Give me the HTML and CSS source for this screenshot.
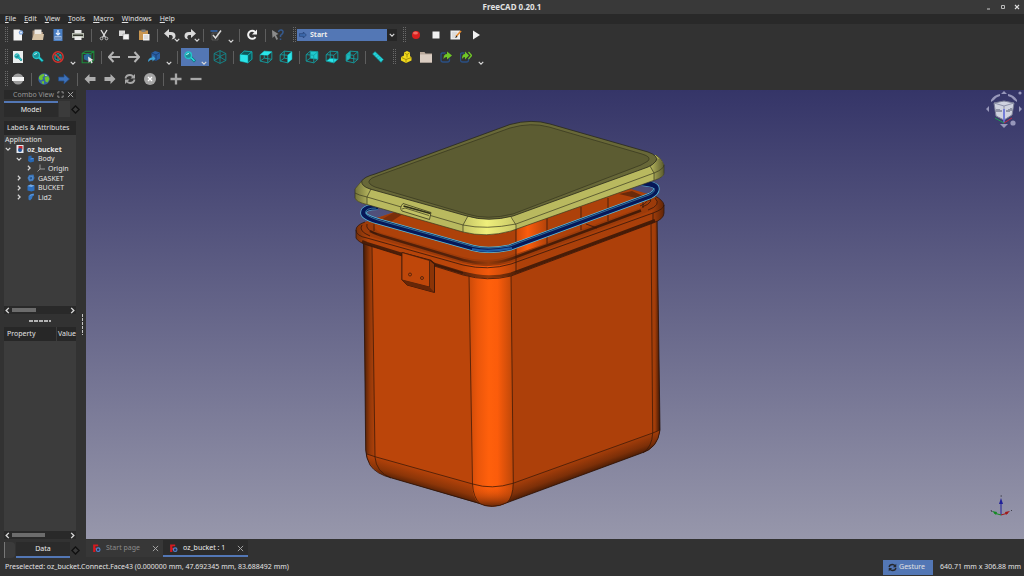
FILE: index.html
```html
<!DOCTYPE html>
<html lang="en">
<head>
    <meta charset="UTF-8">
    <meta name="viewport" content="width=device-width, initial-scale=1.0">
    <title>FreeCAD 0.20.1</title>
    <link rel="stylesheet" href="styles.css">
</head>
<body>
    <!-- shared icons -->
    <svg class="defs" width="0" height="0" aria-hidden="true">
        <symbol id="chev" viewBox="0 0 8 8"><path d="M1 2.5L4 5.5L7 2.5" fill="none" stroke="#d8d8d8" stroke-width="1.6"/></symbol>
        <symbol id="chev-r" viewBox="0 0 8 8"><path d="M2.5 1L5.5 4L2.5 7" fill="none" stroke="#d8d8d8" stroke-width="1.6"/></symbol>
        <symbol id="chev-l" viewBox="0 0 8 8"><path d="M5.5 1L2.5 4L5.5 7" fill="none" stroke="#d8d8d8" stroke-width="1.6"/></symbol>
        <symbol id="close" viewBox="0 0 8 8"><path d="M1 1L7 7M7 1L1 7" fill="none" stroke="#a5a5a5" stroke-width="1.1"/></symbol>
        <symbol id="cube" viewBox="0 0 24 24"><path d="M2 8L15 9V22L2 19ZM2 8L9 2L22 3L15 9M22 3V16L15 22M9 2V14L2 19M9 14L22 16" fill="none" stroke="#12a0a4" stroke-width="1.5" stroke-linejoin="round"/></symbol>
        <symbol id="left" viewBox="0 0 24 24"><path d="M1 12L11 2V8H23V16H11V22Z" fill="#adadad"/></symbol>
        <symbol id="right" viewBox="0 0 24 24"><path d="M23 12L13 2V8H1V16H13V22Z" fill="#adadad"/></symbol>
        <symbol id="thin-left" viewBox="0 0 24 24"><path d="M11 2L2 12L11 22M2 12H24" fill="none" stroke="#b4b4b4" stroke-width="4"/></symbol>
        <symbol id="thin-right" viewBox="0 0 24 24"><path d="M13 2L22 12L13 22M22 12H0" fill="none" stroke="#b4b4b4" stroke-width="4"/></symbol>
        <symbol id="lens" viewBox="0 0 24 24"><path d="M12 11L22 21" stroke="#0d7377" stroke-width="6"/><path d="M13 12L21 20" stroke="#2ad4da" stroke-width="3.4"/><circle cx="8.500" cy="8.500" r="6.500" fill="#1b8f96" stroke="#23c4ca" stroke-width="2.6"/><path d="M5 8Q6 5 10 5" stroke="#b4f4f5" stroke-width="2.4" fill="none"/></symbol>
        <symbol id="reload" viewBox="0 0 24 24"><path d="M3 11Q4 4 12 4Q16 4 19 8M21 13Q20 20 12 20Q8 20 5 16" fill="none" stroke="currentColor" stroke-width="3.6"/><path d="M22 2V11H13ZM2 22V13H11Z" fill="currentColor"/></symbol>
        <symbol id="undo" viewBox="0 0 24 24"><path d="M0 9L10 0V6H14Q23 6 23 14Q23 20 15 21Q19 17 17 14Q16 12 13 12H10V18Z" fill="#dadada"/></symbol>
        <symbol id="logo" viewBox="0 0 16 16"><path d="M2 1H11V4H6V7H9V10H6V14H2Z" fill="#d31a20"/><circle cx="11" cy="10" r="3.2" fill="#26324d" stroke="#5485cf" stroke-width="2"/></symbol>
        <symbol id="float" viewBox="0 0 8 8"><path d="M1 3V1H3M5 1H7V3M7 5V7H5M3 7H1V5" fill="none" stroke="#a5a5a5"/></symbol>
        <symbol id="diamond" viewBox="0 0 8 8"><path d="M4 .8L7.2 4L4 7.2L.8 4Z" fill="#3a3a3a" stroke="#111" stroke-width="1.2"/></symbol>
    </svg>

    <header class="titlebar">
        <span class="title">FreeCAD 0.20.1</span>
        <div class="win-buttons">
            <button aria-label="Minimize"><svg viewBox="0 0 8 8"><path d="M2 6H5" stroke="#ccc"/></svg></button>
            <button aria-label="Maximize"><svg viewBox="0 0 8 8"><path d="M2.5 2.5H5.5V5.5H2.5Z" fill="none" stroke="#bbb"/></svg></button>
            <button aria-label="Close"><svg viewBox="0 0 8 8"><path d="M2 2L6 6M6 2L2 6" stroke="#ddd" stroke-width="1.2"/></svg></button>
        </div>
    </header>

    <nav class="menubar">
        <button><u>F</u>ile</button>
        <button><u>E</u>dit</button>
        <button><u>V</u>iew</button>
        <button><u>T</u>ools</button>
        <button><u>M</u>acro</button>
        <button><u>W</u>indows</button>
        <button><u>H</u>elp</button>
    </nav>

    <div class="toolbars">
        <div class="toolbar">
            <span class="handle"></span>
            <button class="tool" aria-label="New"><svg viewBox="0 0 24 24"><path d="M3 1H15L20 6V23H3Z" fill="#f4f4f4"/><circle cx="18" cy="7" r="4.5" fill="#7fa5dc"/><circle cx="18" cy="7" r="2" fill="#e3edfb"/></svg></button>
            <button class="tool" aria-label="Open"><svg viewBox="0 0 24 24"><path d="M1 3H10L12 6H22V20H1Z" fill="#a58f78"/><path d="M5 1H19V12H5Z" fill="#eee9e2"/><path d="M0 21L4 10H24L22 22H0Z" fill="#d8c4a6"/></svg></button>
            <button class="tool" aria-label="Save"><svg viewBox="0 0 24 24"><path d="M3 0H21V24H3Z" fill="#4a7fc4"/><path d="M5 14H19V21H5Z" fill="#9dbbe2"/><path d="M12 2V11M8 8L12 12L16 8" stroke="#e8f0fb" stroke-width="2.4" fill="none"/><path d="M6 18H18" stroke="#42699c" stroke-width="2"/></svg></button>
            <button class="tool" aria-label="Print"><svg viewBox="0 0 24 24"><path d="M5 2H19V9H5Z" fill="#e6e6e6"/><path d="M0 8H24V18H0Z" fill="#b6bbb0"/><path d="M2 11H22V14H2Z" fill="#34382f"/><path d="M5 15H19V22H5Z" fill="#ececec"/></svg></button>
            <span class="sep"></span>
            <button class="tool" aria-label="Cut"><svg viewBox="0 0 24 24"><path d="M6 2L15 17M18 2L9 17" stroke="#dedede" stroke-width="2.8"/><circle cx="7" cy="19" r="2.6" fill="none" stroke="#bbb" stroke-width="2"/><circle cx="17" cy="19" r="2.6" fill="none" stroke="#bbb" stroke-width="2"/></svg></button>
            <button class="tool" aria-label="Copy"><svg viewBox="0 0 24 24"><path d="M2 3H14V14H2Z" fill="#d9d9d9"/><path d="M10 10H22V21H10Z" fill="#f2f2f2" stroke="#777"/></svg></button>
            <button class="tool" aria-label="Paste"><svg viewBox="0 0 24 24"><path d="M2 3H20V22H2Z" fill="#c99650"/><path d="M7 1H15V6H7Z" fill="#7d7d7d"/><path d="M10 10H23V23H10Z" fill="#efefef"/><path d="M12 14H20M12 18H20" stroke="#aaa"/></svg></button>
            <span class="sep"></span>
            <button class="tool corner" aria-label="Undo"><svg><use href="#undo"/></svg><svg class="chev"><use href="#chev"/></svg></button>
            <button class="tool corner" aria-label="Redo"><svg viewBox="0 0 24 24"><use href="#undo" transform="matrix(-1 0 0 1 24 0)"/></svg><svg class="chev"><use href="#chev"/></svg></button>
            <span class="sep"></span>
            <button class="tool drop" aria-label="Check"><svg viewBox="0 0 24 24"><path d="M1 2H15V6H1Z" fill="#31588f"/><path d="M4 8H16V22H4Z" fill="none" stroke="#666" stroke-width="1.4"/><path d="M6 12L11 18L22 3" stroke="#dcdcdc" stroke-width="3" fill="none"/></svg><svg class="chev"><use href="#chev"/></svg></button>
            <span class="sep"></span>
            <button class="tool" aria-label="Refresh"><svg viewBox="0 0 24 24"><path d="M19 16A8 8 0 1 1 18 6" fill="none" stroke="#f2f2f2" stroke-width="4"/><path d="M22 1V11H12Z" fill="#f2f2f2"/></svg></button>
            <span class="sep"></span>
            <button class="tool" aria-label="What's this?"><svg viewBox="0 0 24 24"><path d="M0 2L13 10L8 12L12 20L9 22L5 14L1 18Z" fill="#8b8b8b"/><path d="M13 6Q14 1 19 2Q24 4 21 9L17 13V16M17 19V22" fill="none" stroke="#35598d" stroke-width="3"/></svg></button>
            <span class="handle"></span>
            <div class="workbench">
                <svg class="wb-icon" viewBox="0 0 24 24"><path d="M1 8H13V3L22 12L13 21V16H1Z" fill="#3d69ab" stroke="#213f72" stroke-width="2"/></svg>
                <select aria-label="Workbench"><option>Start</option></select>
                <span class="wb-arrow"><svg class="chev"><use href="#chev"/></svg></span>
            </div>
            <span class="handle"></span>
            <button class="tool" aria-label="Record macro"><svg viewBox="0 0 24 24"><circle cx="12" cy="12" r="8" fill="#d81f1f"/><ellipse cx="11" cy="8" rx="5" ry="3" fill="#f06a60"/></svg></button>
            <button class="tool" aria-label="Stop macro"><svg viewBox="0 0 24 24"><path d="M5 5H19V19H5Z" fill="#f1f1f1"/></svg></button>
            <button class="tool" aria-label="Edit macro"><svg viewBox="0 0 24 24"><path d="M1 3H20V21H1Z" fill="#ececec"/><path d="M4 8H14M4 12H12M4 16H14" stroke="#aaa"/><path d="M22 4L12 15" stroke="#e58a2e" stroke-width="3.4"/><path d="M13 13L10 18L15 16Z" fill="#222"/></svg></button>
            <button class="tool" aria-label="Run macro"><svg viewBox="0 0 24 24"><path d="M6 3L20 12L6 21Z" fill="#f2f2f2"/></svg></button>
        </div>

        <div class="toolbar">
            <span class="handle"></span>
            <button class="tool" aria-label="Fit all"><svg viewBox="0 0 24 24"><path d="M2 0H22V24H2Z" fill="#e9eeee"/><use href="#lens" x="4" y="4" width="17" height="17"/></svg></button>
            <button class="tool" aria-label="Fit selection"><svg><use href="#lens"/></svg></button>
            <button class="tool drop" aria-label="Draw style"><svg viewBox="0 0 24 24"><path d="M6 8L12 5L18 8V16L12 19L6 16ZM6 8L12 11L18 8M12 11V19" fill="#114648" stroke="#1cb4b8" stroke-width="1.8"/><circle cx="12" cy="12" r="10.400" fill="none" stroke="#d8322d" stroke-width="2.800"/><path d="M5 5L19 19" stroke="#d8322d" stroke-width="2.800"/></svg><svg class="chev"><use href="#chev"/></svg></button>
            <button class="tool cube" aria-label="Bounding box"><svg viewBox="0 0 24 24"><path d="M2 6L8 2H22V17L17 22H2ZM2 6H17V22M17 6L22 2" fill="none" stroke="#1c8b3c" stroke-width="1.8"/><path d="M5 9L12 6L17 9V16L12 19L5 16Z" fill="#2a6a9a"/><path d="M12 11L21 17L18 18L20 22L18 23L16 19L13 22Z" fill="#e6e6e6"/></svg></button>
            <span class="sep"></span>
            <button class="tool" aria-label="Back"><svg><use href="#thin-left"/></svg></button>
            <button class="tool" aria-label="Forward"><svg><use href="#thin-right"/></svg></button>
            <button class="tool drop" aria-label="Link navigation"><svg viewBox="0 0 24 24"><path d="M7 4L14 0L24 3V15L16 20L7 16Z" fill="#2b5fa3"/><path d="M7 4L16 8L24 3M16 8V20" stroke="#173a69" fill="none" stroke-width="1.5"/><path d="M0 22Q0 13 9 13V9L15 15L9 21V17Q4 17 0 22Z" fill="#3fa0d6"/></svg><svg class="chev"><use href="#chev"/></svg></button>
            <span class="sep"></span>
            <button class="tool drop active" aria-label="Zoom"><svg><use href="#lens"/></svg><svg class="chev"><use href="#chev"/></svg></button>
            <button class="tool cube" aria-label="Isometric"><svg viewBox="0 0 24 24"><path d="M12 1L22 6V18L12 23L2 18V6ZM2 6L12 11L22 6M12 11V23M12 1V12L2 18M12 12L22 18" fill="none" stroke="#128d91" stroke-width="1.5"/></svg></button>
            <span class="sep"></span>
            <button class="tool cube" aria-label="Front"><svg viewBox="0 0 24 24"><use href="#cube"/><path d="M9 2L22 3L15 9L2 8ZM15 9L22 3V16L15 22Z" fill="#0f5558" stroke="#12a0a4" stroke-width="1.500"/><path d="M2 8L15 9V22L2 19Z" fill="#2be5ea"/></svg></button>
            <button class="tool cube" aria-label="Top"><svg viewBox="0 0 24 24"><use href="#cube"/><path d="M2 8L9 2L22 3L15 9Z" fill="#2be5ea"/></svg></button>
            <button class="tool cube" aria-label="Right"><svg viewBox="0 0 24 24"><use href="#cube"/><path d="M15 9L22 3V16L15 22Z" fill="#2be5ea"/></svg></button>
            <span class="sep"></span>
            <button class="tool cube" aria-label="Rear"><svg viewBox="0 0 24 24"><path d="M9 2L22 3V16L9 14Z" fill="#20c9cd"/><use href="#cube"/></svg></button>
            <button class="tool cube" aria-label="Bottom"><svg viewBox="0 0 24 24"><path d="M2 19L9 14L22 16L15 22Z" fill="#2be5ea"/><use href="#cube"/></svg></button>
            <button class="tool cube" aria-label="Left"><svg viewBox="0 0 24 24"><path d="M2 8L9 2V14L2 19Z" fill="#20b9bd"/><use href="#cube"/></svg></button>
            <span class="sep"></span>
            <button class="tool" aria-label="Measure"><svg viewBox="0 0 24 24"><path d="M1 6L6 1L23 17L18 23Z" fill="#27d3d9" stroke="#0c7478" stroke-width="1.2"/><path d="M8 7L6 9M12 11L10 13M16 15L14 17" stroke="#0c5c60" stroke-width="1.2"/></svg></button>
            <span class="handle"></span>
            <button class="tool" aria-label="Create part"><svg viewBox="0 0 24 24"><path d="M8 3L14 0L20 3V10L23 13V19L12 24L2 19V12L8 9Z" fill="#f0d81c"/><path d="M3 13L12 17L23 13M12 17V23M9 4L14 7L19 4M14 7V13" fill="none" stroke="#8f7b05" stroke-width="1.5"/></svg></button>
            <button class="tool" aria-label="Create group"><svg viewBox="0 0 24 24"><path d="M0 2H9L11 5H24V23H0Z" fill="#b9a99b"/><path d="M0 7H24V23H0Z" fill="#dacdc2"/></svg></button>
            <button class="tool" aria-label="Make link"><svg viewBox="0 0 24 24"><path d="M11 4H5Q2 4 2 8V18Q2 22 6 22H15Q19 22 19 18V15" fill="none" stroke="#2a4f84" stroke-width="2.6"/><path d="M7 16Q7 6 14 6V1L24 9L14 17V12Q9 12 7 16Z" fill="#6fc727"/></svg></button>
            <button class="tool drop" aria-label="Link actions"><svg viewBox="0 0 24 24"><path d="M9 4H4Q1 4 1 8V18Q1 22 5 22H13Q17 22 17 18V15" fill="none" stroke="#2a4f84" stroke-width="2.6"/><path d="M4 16Q4 6 10 6V1L18 9L10 17V12Q6 12 4 16Z" fill="#6fc727"/><path d="M17 2L23 9L17 16" fill="none" stroke="#6fc727" stroke-width="2.5"/></svg><svg class="chev"><use href="#chev"/></svg></button>
        </div>

        <div class="toolbar">
            <span class="handle"></span>
            <button class="tool" aria-label="Set URL"><svg viewBox="0 0 24 24"><circle cx="12" cy="12" r="11" fill="#9b9b9b"/><path d="M0 8H24V16H0Z" fill="#f4f4f4"/></svg></button>
            <span class="sep"></span>
            <button class="tool" aria-label="Open website"><svg viewBox="0 0 24 24"><circle cx="12" cy="12" r="11.500" fill="#3564a5"/><path d="M2 8Q5 2 12 2L13 6L9 8L10 12L6 15L2 12ZM13 9L20 6L23 12L19 19L15 17ZM7 17L12 16V22L8 21Z" fill="#6ec430"/><path d="M13 3L18 4L16 7Z" fill="#e2f0d4"/></svg></button>
            <button class="tool" aria-label="Start page"><svg viewBox="0 0 24 24"><path d="M1 8H12V2L23 12L12 22V16H1Z" fill="#3c70b8" stroke="#24497f" stroke-width="1.5"/></svg></button>
            <span class="sep"></span>
            <button class="tool" aria-label="Previous page"><svg><use href="#left"/></svg></button>
            <button class="tool" aria-label="Next page"><svg><use href="#right"/></svg></button>
            <button class="tool dim" aria-label="Reload page"><svg><use href="#reload"/></svg></button>
            <button class="tool" aria-label="Stop loading"><svg viewBox="0 0 24 24"><circle cx="12" cy="12" r="12" fill="#a5a5a5"/><path d="M8 8L16 16M16 8L8 16" stroke="#fff" stroke-width="2.6"/></svg></button>
            <span class="sep"></span>
            <button class="tool" aria-label="Zoom in"><svg viewBox="0 0 24 24"><path d="M12 1V23M1 12H23" stroke="#a8a8a8" stroke-width="4.6"/></svg></button>
            <button class="tool" aria-label="Zoom out"><svg viewBox="0 0 24 24"><path d="M1 12H23" stroke="#a8a8a8" stroke-width="4.6"/></svg></button>
        </div>
    </div>

    <main class="main">
        <aside class="dock">
            <div class="dock-title">
                <span>Combo View</span>
                <button aria-label="Float"><svg><use href="#float"/></svg></button>
                <button aria-label="Close panel"><svg><use href="#close"/></svg></button>
            </div>
            <div class="dock-tabs top">
                <button class="dock-tab">Model</button>
                <span class="tab-stub"></span>
                <svg class="diamond"><use href="#diamond"/></svg>
            </div>
            <div class="panel tree-panel">
                <div class="panel-head"><span>Labels &amp; Attributes</span></div>
                <ul class="tree">
                    <li>Application</li>
                    <li class="l1"><svg><use href="#chev"/></svg><svg class="ico" viewBox="0 0 16 16"><path d="M1 0H15V16H1Z" fill="#e6e9ef"/><path d="M5 2H13V9H5Z" fill="#c8232a"/><circle cx="8" cy="10" r="4" fill="#24579b"/></svg><b>oz_bucket</b></li>
                    <li class="l2"><svg><use href="#chev"/></svg><svg class="ico" viewBox="0 0 16 16"><path d="M3 2L9 1V5L14 7V13L7 15L2 12Z" fill="#2767b2"/><path d="M7 8L13 7" stroke="#5b9ae0" stroke-width="2"/></svg>Body</li>
                    <li class="l3"><svg><use href="#chev-r"/></svg><svg class="ico" viewBox="0 0 16 16"><path d="M6 1V10H16M6 10L1 15" fill="none" stroke="#b0b0b0" stroke-width="1.6"/></svg>Origin</li>
                    <li class="l2"><svg><use href="#chev-r"/></svg><svg class="ico" viewBox="0 0 16 16"><path d="M4 2L13 1L15 8L12 14L4 15L1 8Z" fill="#3b76ba"/><path d="M4 6L11 5V11L5 12Z" fill="#245694" stroke="#75a9e0"/></svg>GASKET</li>
                    <li class="l2"><svg><use href="#chev-r"/></svg><svg class="ico" viewBox="0 0 16 16"><path d="M1 4L7 1L15 3V13L9 15L1 13Z" fill="#2b6fc0"/><path d="M1 4L7 1L15 3L9 6Z" fill="#76aae4"/></svg>BUCKET</li>
                    <li class="l2"><svg><use href="#chev-r"/></svg><svg class="ico" viewBox="0 0 16 16"><path d="M3 6Q6 1 14 1V5Q10 6 10 11L6 15L3 13Z" fill="#3678c4"/><path d="M6 5Q9 3 13 3" stroke="#8fbbee" fill="none"/></svg>Lid2</li>
                </ul>
                <div class="scroll"><svg><use href="#chev-l"/></svg><span class="track"><span class="thumb"></span></span><svg><use href="#chev-r"/></svg></div>
            </div>
            <div class="split-h"></div>
            <div class="panel prop-panel">
                <div class="panel-head"><span class="prop">Property</span><span class="value">Value</span></div>
                <div class="props"></div>
                <div class="scroll"><svg><use href="#chev-l"/></svg><span class="track"><span class="thumb wide"></span></span><svg><use href="#chev-r"/></svg></div>
            </div>
            <div class="dock-tabs bottom">
                <span class="tab-stub"></span>
                <button class="dock-tab">Data</button>
                <svg class="diamond"><use href="#diamond"/></svg>
            </div>
        </aside>
        <div class="split-v"></div>

        <section class="workspace">
            <div class="view3d">
                <svg class="scene" viewBox="86 90 938 449" stroke-linejoin="round" role="img" aria-label="Bucket with gasket and lid">
                    <defs>
                        <linearGradient id="front" x1="469" x2="513" y1="0" y2="0" gradientUnits="userSpaceOnUse"><stop offset="0" stop-color="#cb4a09"/><stop offset=".2" stop-color="#ea560b"/><stop offset=".45" stop-color="#ff600c"/><stop offset=".65" stop-color="#fb5c0b"/><stop offset="1" stop-color="#bd4709"/></linearGradient>
                        <linearGradient id="sideL" x1="364" x2="376" y1="0" y2="0" gradientUnits="userSpaceOnUse"><stop offset="0" stop-color="#4d1e06"/><stop offset=".5" stop-color="#943809"/><stop offset="1" stop-color="#b7440a"/></linearGradient>
                        <linearGradient id="sideR" x1="650" x2="660" y1="0" y2="0" gradientUnits="userSpaceOnUse"><stop offset="0" stop-color="#a83f0a"/><stop offset=".5" stop-color="#a23d09"/><stop offset="1" stop-color="#3a1605"/></linearGradient>
                        <linearGradient id="botL" x1="424" y1="470" x2="418" y2="491" gradientUnits="userSpaceOnUse"><stop offset="0" stop-color="#b6430a"/><stop offset=".5" stop-color="#8b3508"/><stop offset="1" stop-color="#331405"/></linearGradient>
                        <linearGradient id="botR" x1="580" y1="459" x2="587" y2="478" gradientUnits="userSpaceOnUse"><stop offset="0" stop-color="#a63e0a"/><stop offset=".5" stop-color="#7c2f08"/><stop offset="1" stop-color="#2b1104"/></linearGradient>
                        <linearGradient id="botC" x1="0" x2="0" y1="484" y2="507" gradientUnits="userSpaceOnUse"><stop offset="0" stop-color="#ff5f0c" stop-opacity="0"/><stop offset="1" stop-color="#5e2406"/></linearGradient>
                        <linearGradient id="inner" x1="515" x2="547" y1="0" y2="0" gradientUnits="userSpaceOnUse"><stop offset="0" stop-color="#c84a0a"/><stop offset=".4" stop-color="#fb5c0c"/><stop offset="1" stop-color="#b2430a"/></linearGradient>
                        <linearGradient id="lidL" x1="355" x2="371" y1="0" y2="0" gradientUnits="userSpaceOnUse"><stop offset="0" stop-color="#737339"/><stop offset="1" stop-color="#bcbc61"/></linearGradient>
                        <linearGradient id="lidC" x1="463" x2="516" y1="0" y2="0" gradientUnits="userSpaceOnUse"><stop offset="0" stop-color="#c4c465"/><stop offset=".45" stop-color="#efef7b"/><stop offset="1" stop-color="#c8c867"/></linearGradient>
                        <linearGradient id="lidR" x1="651" x2="664" y1="0" y2="0" gradientUnits="userSpaceOnUse"><stop offset="0" stop-color="#b2b25b"/><stop offset="1" stop-color="#5a5a2e"/></linearGradient>
                        <linearGradient id="rim" x1="356" x2="664" y1="0" y2="0" gradientUnits="userSpaceOnUse"><stop offset="0" stop-color="#75300a"/><stop offset=".04" stop-color="#b0420a"/><stop offset=".34" stop-color="#bc460a"/><stop offset=".43" stop-color="#f4590b"/><stop offset=".53" stop-color="#ad410a"/><stop offset=".96" stop-color="#a83f0a"/><stop offset="1" stop-color="#602507"/></linearGradient>
                        <linearGradient id="groove" x1="356" x2="664" y1="0" y2="0" gradientUnits="userSpaceOnUse"><stop offset="0" stop-color="#4a1d07"/><stop offset=".34" stop-color="#54210a"/><stop offset=".43" stop-color="#963a09"/><stop offset=".53" stop-color="#4a1d07"/><stop offset="1" stop-color="#451b07"/></linearGradient>
                    </defs>

                    <!-- bucket body -->
                    <path d="M363.500 240L365.700 450Q366 458 370 465Q376 474 391.700 478L478 503Q492 510 507 502.700L641.700 453Q658 448 660 430L657 215L512 265H470Z" fill="#bb450a"/>
                    <path d="M363.500 240L372 243L375 457L391 477Q366 470 365.700 450Z" fill="url(#sideL)"/>
                    <path d="M511 265L652 215L653 433L513 483Z" fill="#ad400a"/>
                    <path d="M651 215H657L660 430Q658 446 643 453Q652 446 653 433Z" fill="url(#sideR)"/>
                    <path d="M366.700 454L375 456.700L472.700 484Q473 497 480 504L391.700 478Q370 472 366.700 454Z" fill="url(#botL)"/>
                    <path d="M513 483L652.700 433L660 430Q658 448 641.700 453L507 502.700Q513 495 513 483Z" fill="url(#botR)"/>
                    <path d="M469 265H511L513 483Q513 497 507 502.700Q492 510 479 503.500Q472 497 472 483Z" fill="url(#front)"/>
                    <path d="M472 484Q492 490 513 483Q513 497 507 502.700Q492 510 479 503.500Q472 497 472 484Z" fill="url(#botC)"/>
                    <g fill="none" stroke="#401a08" stroke-width=".8">
                        <path d="M372 245L375 457Q376 472 391 478M469 275L472.500 484Q473 497 480 504M511 272L513.300 483Q513 497 507 502.700M651 222L652.700 433Q652 447 643 453"/>
                        <path d="M366.700 454L375 456.700L472.700 484Q492 490 513 483.300L652.700 433L660 430"/>
                    </g>
                    <path d="M363.500 240L365.700 450Q366 458 370 465Q376 474 391.700 478L478 503Q492 510 507 502.700L641.700 453Q658 448 660 430L657 215" fill="none" stroke="#24120b" stroke-width=".8"/>

                    <!-- rim of the bucket -->
                    <path d="M365 222Q356 225 356 230V238Q358 242 367 245L463 275Q488 282 511 276L653 223Q664 219 664 213V205Q663 200 655 196L600 180L430 200Z" fill="url(#rim)"/>
                    <path d="M366 222Q356 229 368 236L463 263Q488 270 512 262L650 211Q661 206 655 197L600 181L430 200Z" fill="#9c3b0a"/>
                    <path d="M373 222Q372 228 381 233L463 257Q488 264 512 255L640 208Q651 203 645 194L600 181L430 200Z" fill="#ad410a"/>
                    <path d="M516 218L547 207V243L516 254Z" fill="url(#inner)"/>
                    <g fill="none" stroke="url(#groove)">
                        <path d="M362 241.500L367 243.500L463 273Q488 280 511 274L655 220.500" stroke-width="3"/>
                        <path d="M370 231Q374 233.500 381 235.500L463 260Q488 267 512 258.500L641 210.500" stroke-width="2.600"/>
                    </g>
                    <g fill="none" stroke="#35170b" stroke-width=".8">
                        <path d="M356 230Q356 236 367 238L463 265Q488 271 511 264L653 213Q664 209 664 205"/>
                        <path d="M362 225Q358 231 370 236M648 210Q662 205 655 198"/>
                        <path d="M367 224Q365 230 377 234M642 207Q656 202 648 195M640 206Q651 202 645 195"/>
                        <path d="M365 222Q356 225 356 230V238Q358 242 367 245L463 275Q488 282 511 276L653 223Q664 219 664 213V205Q663 200 655 196"/>
                        <path d="M516 220V272M547 218V244M581 207V230M608 198V221M653 213V220M586 224L597 228M374 224V231M643 202V208"/>
                    </g>
                    <path d="M375 223L395 212L403 214L386 225Z" fill="#7a2f0a"/>
                    <path d="M619 194L632 191L650 199V201L640 199Z" fill="#6b2a0a"/>

                    <!-- latch plate -->
                    <path d="M402 252.500L430 260L434.500 263.500V292.500L407 285L402 280Z" fill="#8b3407" stroke="#35150a" stroke-width=".9"/>
                    <path d="M402 252.500L429.500 260.500V287L402 280Z" fill="#bf470a" stroke="#45200e" stroke-width=".8"/>
                    <path d="M402 280L429.500 287L434.500 292.500L407 285Z" fill="#672607"/>
                    <path d="M430 260L436 265L463 273" fill="none" stroke="#401a08" stroke-width="1.400"/>
                    <circle cx="410" cy="274.500" r="1.500" fill="none" stroke="#30180c" stroke-width=".7"/>
                    <circle cx="422" cy="278" r="1.500" fill="none" stroke="#30180c" stroke-width=".7"/>

                    <!-- gasket -->
                    <g fill="none">
                        <path d="M378 207Q363 207 363.500 213Q363 217 377 221L473 248Q488 252 510 247.500L650 196Q658 192 656 187Q654 184 642 183" stroke="#58bede" stroke-width="6.200"/>
                        <path d="M378 207Q363 207 363.500 213Q363 217 377 221L473 248Q488 252 510 247.500L650 196Q658 192 656 187Q654 184 642 183" stroke="#061758" stroke-width="4.800"/>
                        <path d="M376 208Q365 208 365.500 213Q366 216 378 220L473 246.500Q488 250 510 246L649 195Q656 192 654 188" stroke="#4896b0" stroke-width=".7"/>
                        <path d="M472 249Q488 253 512 248" stroke="#1e5ea8" stroke-width="2.200"/>
                    </g>

                    <!-- lid -->
                    <path d="M361.700 181L355 189V198Q356 202 367 204.500L463 232Q486 238 511 231L655 180Q664 177 664 173V165Q662 159 656 155L487 150Z" fill="#b9b95f"/>
                    <path d="M362 181L355 189V198Q356 202 367 204.500V197L371 189Z" fill="url(#lidL)"/>
                    <path d="M468 216L463 225V232Q486 238 511 231L516 229V224L511 216Q487 222 468 216Z" fill="url(#lidC)"/>
                    <path d="M656 158L660 159L664 165V173Q664 177 654 180V173L650 166Z" fill="url(#lidR)"/>
                    <path d="M361.700 181Q364 177 375 174L510 124.500Q532 118.500 550 124L648 152Q659 156 656 161Q653 165 648 167L513 216Q488 222.500 467 216L370 189Q361 186 361.700 181Z" fill="#686838" stroke="#28281a" stroke-width=".8"/>
                    <path d="M369 181Q370 178 377 176L510 128Q531 122 549 127L642 154Q652 157 648 161L641 165L513 214Q487 220.500 467 214L375 187Q368 184 369 181Z" fill="#5c5c32" stroke="#35351e" stroke-width=".7"/>
                    <g fill="none" stroke="#38381f" stroke-width=".7">
                        <path d="M355 193Q358 195 367 197L463 225Q486 230 516 224L654 173Q664 169 664 165"/>
                        <path d="M371 189L367 197V204M468 216L463 225V232M511 217L516 225V230M650 166L654 173V180"/>
                        <path d="M361.700 181L355 189V198Q356 202 367 204.500L463 232Q486 238 511 231L655 180Q664 177 664 173V165Q662 159 656 155"/>
                    </g>
                    <path d="M403 203.500L431 212.500L429.500 219.500L402 211Q399 208 403 203.500Z" fill="#c2c265" stroke="#37371e" stroke-width=".8"/>
                    <path d="M403.500 206L430.500 213.500" stroke="#2e2e18" stroke-width="1.800"/>
                    <path d="M402 209L405 208L429 215.500" fill="none" stroke="#4a4a28" stroke-width=".8"/>
                </svg>

                <svg class="navcube" viewBox="0 0 40 40" role="img" aria-label="Navigation cube">
                    <g fill="#9797ba"><path d="M20 1L23 4H17ZM2 19L5 16V22ZM38 19L35 16V22ZM16 34H24L20 38Z"/><circle cx="36" cy="3" r="1.600"/><path d="M7 10Q10 5 16 4V6Q12 7 10 10L7 12ZM33 10Q30 5 24 4V6Q28 7 30 10L33 12Z"/><circle cx="29" cy="33" r="2.600"/></g>
                    <path d="M10 13L20 11L30 13L28 25L20 30L12 26Z" fill="#cfd2df" stroke="#7e8198"/>
                    <path d="M10 13L20 16L30 13M20 16V30" fill="none" stroke="#8c90a8"/>
                    <path d="M13 19V22M15 19V22M17 20V22M23 20V22M25 19V22M27 18V21" stroke="#50546a"/>
                    <path d="M20 33V19" stroke="#6670dc" stroke-width="1.600"/><path d="M20 33L11 28" stroke="#1e9c50"/><path d="M20 33L28 28" stroke="#b82a45"/>
                </svg>

                <svg class="axes" viewBox="0 0 28 26" role="img" aria-label="Axis cross">
                    <path d="M14 20V7" stroke="#20209a"/><path d="M12 9L14 3L16 9Z" fill="#20209a"/>
                    <path d="M14 20L7 18" stroke="#148a22"/><path d="M5 16L10 17L9 20Z" fill="#148a22"/>
                    <path d="M14 20L21 18" stroke="#a01a1a"/><path d="M23 16L18 17L19 20Z" fill="#a01a1a"/>
                    <path d="M13.500 1H15M4 15L5 17M24 15L25 16" stroke="#2b2b35" stroke-width=".8"/>
                </svg>
            </div>
            <div class="doc-tabs">
                <div class="doc-tab"><svg><use href="#logo"/></svg><button>Start page</button><button class="x" aria-label="Close Start page"><svg><use href="#close"/></svg></button></div>
                <div class="doc-tab current"><svg><use href="#logo"/></svg><button>oz_bucket : 1</button><button class="x" aria-label="Close oz_bucket"><svg><use href="#close"/></svg></button></div>
            </div>
        </section>
    </main>

    <footer class="statusbar">
        <span class="message">Preselected: oz_bucket.Connect.Face43 (0.000000 mm, 47.692345 mm, 83.688492 mm)</span>
        <button class="gesture"><svg><use href="#reload"/></svg>Gesture</button>
        <span>640.71 mm x 306.88 mm</span>
    </footer>
</body>
</html>
```
FILE: styles.css
```css
* {
    box-sizing: border-box;
}
body {
    margin: 0;
    height: 100vh;
    display: flex;
    flex-direction: column;
    overflow: hidden;
    background-color: #323232;
    color: #e2e2e2;
    font-family: "Noto Sans", "DejaVu Sans", sans-serif;
    font-size: 7px;
    line-height: 10px;
}
button {
    margin: 0;
    padding: 0;
    border: none;
    background: none;
    color: inherit;
    font: inherit;
    white-space: nowrap;
}
svg {
    display: block;
    flex: none;
}
.defs {
    position: absolute;
}

/* title + menu */
.titlebar {
    display: grid;
    grid-template-columns: 1fr auto 1fr;
    align-items: center;
    height: 14px;
    background-color: #393939;
}
.title {
    grid-column: 2;
    font-size: 8px;
    font-weight: bold;
}
.win-buttons {
    display: flex;
    justify-content: flex-end;
    gap: 6px;
    padding-right: 3px;
}
.win-buttons svg {
    width: 8px;
    height: 8px;
}
.menubar {
    display: flex;
    height: 10px;
    padding-left: 1px;
    background-color: #292929;
}
.menubar button {
    padding: 0 4px;
}

/* toolbars */
.toolbars {
    height: 66px;
}
.toolbar {
    display: flex;
    align-items: center;
    height: 22px;
}
.handle {
    width: 4px;
    height: 16px;
    margin-left: 4px;
    background-image: repeating-linear-gradient(90deg, #323232 0 1px, transparent 1px 2px), repeating-linear-gradient(#6a6a6a 0 1px, #323232 1px 2px);
}
.sep {
    width: 6px;
    height: 13px;
    background: linear-gradient(#5e5e5e, #5e5e5e) center / 1px 100% no-repeat;
}
.tool {
    position: relative;
    display: flex;
    align-items: center;
    width: 20px;
    height: 18px;
    padding: 0 4px;
}
.tool > svg {
    width: 12px;
    height: 12px;
}
.tool.cube {
    padding: 0 3px;
}
.tool.cube > svg {
    width: 14px;
    height: 14px;
}
.tool .chev {
    position: absolute;
    right: 2px;
    bottom: 0;
    width: 6px;
    height: 6px;
}
.tool.corner .chev {
    right: 0;
    bottom: 1px;
}
.tool.drop {
    width: 30px;
}
.tool.active {
    width: 28px;
    margin: 0 1px;
    padding: 0 3px;
    background-color: #5377b5;
}
.dim {
    color: #a8a8a8;
}
.workbench {
    position: relative;
    display: flex;
    width: 100px;
    height: 12px;
    margin: 0 1px;
}
.workbench select {
    flex: 1;
    padding: 0 0 0 13px;
    border: none;
    border-radius: 0;
    appearance: none;
    background-color: #5377b5;
    color: #ececec;
    font: bold 7px/12px "Noto Sans", sans-serif;
}
.wb-icon {
    position: absolute;
    left: 2px;
    top: 2px;
    width: 8px;
    height: 8px;
}
.wb-arrow {
    display: grid;
    place-items: center;
    width: 10px;
    background-color: #262626;
}
.wb-arrow .chev {
    width: 6px;
    height: 6px;
}

/* left dock */
.main {
    flex: 1;
    display: flex;
    min-height: 0;
}
.dock {
    display: flex;
    flex-direction: column;
    width: 80px;
    padding-left: 4px;
}
.dock-title {
    display: flex;
    align-items: center;
    gap: 3px;
    height: 9px;
    margin-right: 4px;
    padding: 0 2px 0 9px;
    background-color: #292929;
    color: #969696;
}
.dock-title span {
    flex: 1;
    white-space: nowrap;
}
.dock-title svg {
    width: 7px;
    height: 7px;
}
.dock-tabs {
    display: flex;
    gap: 1px;
    align-items: stretch;
    height: 16px;
}
.dock-tabs.top {
    margin: 2px 0 4px;
}
.dock-tabs.bottom {
    margin-top: 3px;
}
.dock-tab {
    width: 54px;
    background-color: #2b2b2b;
    color: #ececec;
}
.top .dock-tab {
    border-top: 2px solid #5377b5;
}
.bottom .dock-tab {
    border-bottom: 2px solid #5377b5;
}
.tab-stub {
    width: 11px;
    background-color: #3b3b3b;
}
.bottom .tab-stub {
    border-left: 1px solid #777;
    border-radius: 0 4px 4px 0;
}
.diamond {
    align-self: center;
    width: 9px;
    height: 9px;
    margin-left: auto;
}
.panel {
    display: flex;
    flex-direction: column;
    width: 72px;
    background-color: #3c3c3c;
}
.tree-panel {
    flex: 193 1 0;
}
.prop-panel {
    flex: 211 1 0;
}
.panel-head {
    display: flex;
    gap: 1px;
    height: 14px;
    background-color: #3c3c3c;
    line-height: 14px;
}
.panel-head span {
    flex: 1;
    padding-left: 3px;
    background-color: #272727;
    white-space: nowrap;
}
.panel-head .prop {
    flex: none;
    width: 52px;
}
.panel-head .value {
    padding-left: 1px;
}
.tree {
    flex: 0 0 67px;
    display: grid;
    grid-auto-rows: 1fr;
    margin: 0 0 auto;
    padding: 0;
    line-height: 9px;
    list-style: none;
}
.tree li {
    display: flex;
    align-items: center;
    padding-left: 1px;
}
.tree .l2 {
    padding-left: 12px;
}
.tree .l3 {
    padding-left: 22px;
}
.tree svg {
    width: 6px;
    height: 6px;
    margin-right: 5px;
}
.tree .ico {
    width: 8px;
    height: 8px;
    margin-right: 3px;
}
.props {
    flex: 1;
}
.scroll {
    display: flex;
    align-items: center;
    height: 8px;
    background-color: #292929;
}
.scroll svg {
    width: 7px;
    height: 7px;
}
.track {
    flex: 1;
}
.thumb {
    display: block;
    width: 24px;
    height: 4px;
    margin-left: 1px;
    background-color: #6c6c6c;
}
.thumb.wide {
    width: 33px;
}
.split-h {
    width: 22px;
    height: 13px;
    margin-left: 25px;
    background: repeating-linear-gradient(90deg, #b4b4b4 0 4px, transparent 4px 5px) center / 100% 2px no-repeat;
}
.split-v {
    width: 6px;
    background: repeating-linear-gradient(#c4c4c4 0 3px, transparent 3px 4px) 2px 50% / 1px 21px no-repeat;
}

/* 3D view */
.workspace {
    flex: 1;
    display: flex;
    flex-direction: column;
    min-width: 0;
}
.view3d {
    position: relative;
    flex: 1;
    min-height: 0;
    background: linear-gradient(#353568, #9797ab);
}
.scene {
    width: 100%;
    height: 100%;
}
.navcube {
    position: absolute;
    top: 0;
    right: 0;
    width: 40px;
    height: 40px;
}
.axes {
    position: absolute;
    right: 9px;
    bottom: 18px;
    width: 28px;
    height: 26px;
}
.doc-tabs {
    display: flex;
    height: 19px;
    padding: 1px 0;
}
.doc-tab {
    display: flex;
    align-items: center;
    padding: 1px 4px 0 6px;
    border-bottom: 2px solid transparent;
    background-color: #373737;
    color: #8c8c8c;
}
.doc-tab > svg {
    width: 9px;
    height: 9px;
    margin-right: 5px;
}
.doc-tab .x {
    margin-left: 12px;
}
.doc-tab .x svg {
    width: 7px;
    height: 7px;
}
.doc-tab.current {
    border-color: #5377b5;
    background-color: #2b2b2b;
    color: #ececec;
}

/* status bar */
.statusbar {
    display: flex;
    align-items: center;
    gap: 7px;
    height: 18px;
    padding: 0 3px 0 5px;
}
.message {
    flex: 1;
}
.gesture {
    display: flex;
    align-items: center;
    gap: 2px;
    height: 15px;
    padding: 0 8px 0 5px;
    background-color: #5377b5;
}
.gesture svg {
    width: 9px;
    height: 9px;
    color: #26292f;
}
```
